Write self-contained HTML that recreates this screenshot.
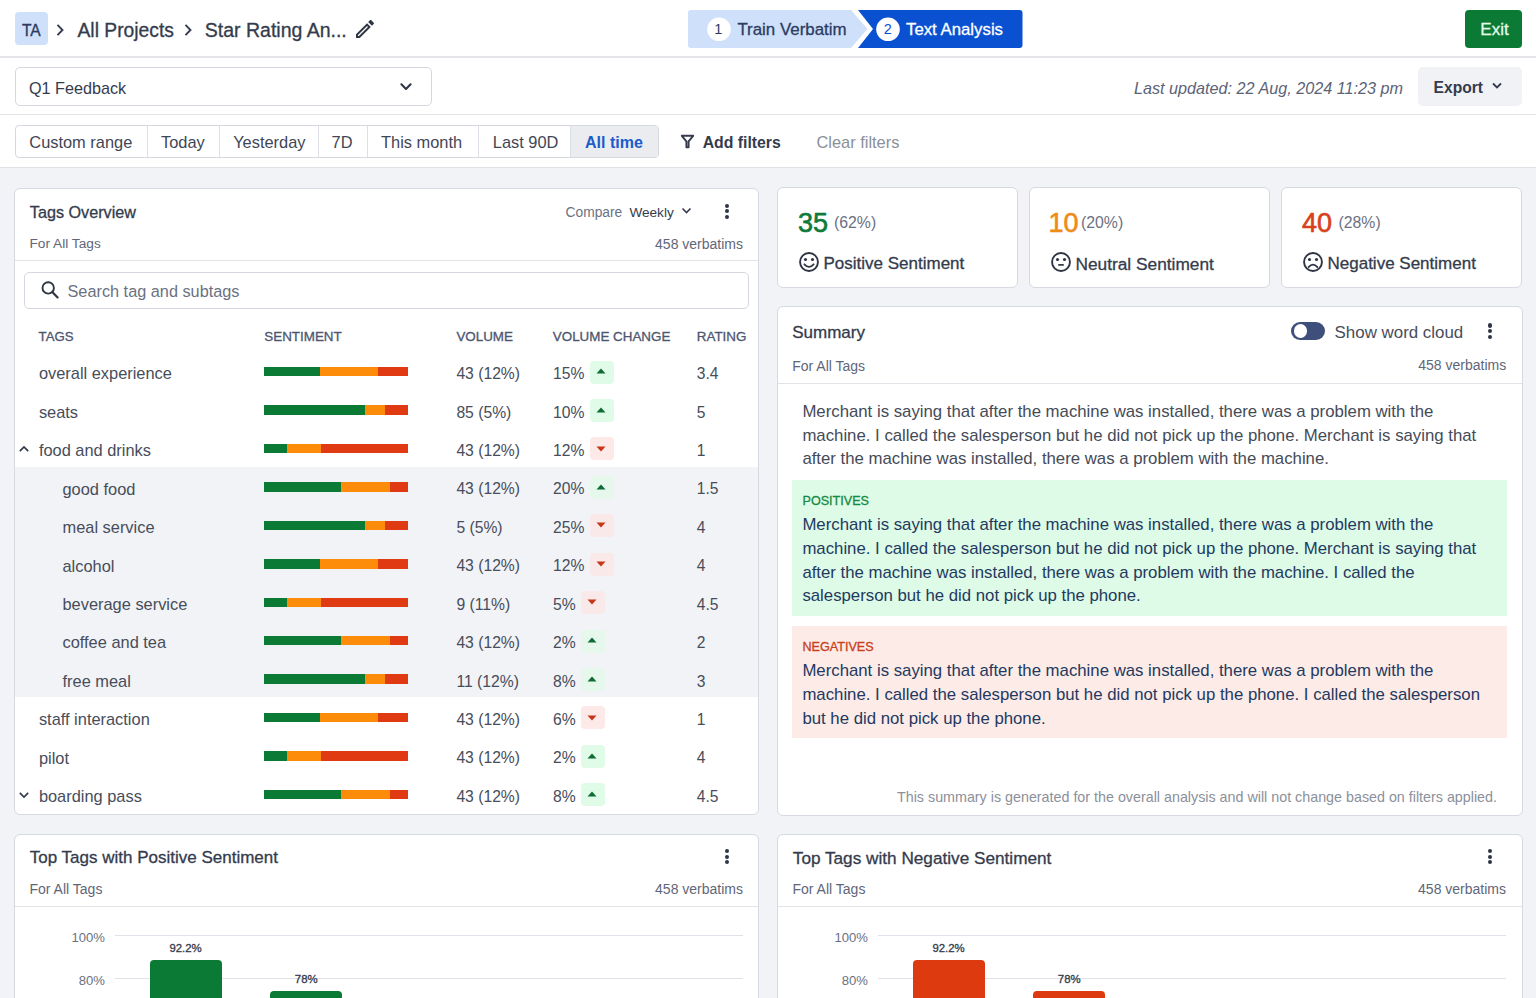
<!DOCTYPE html>
<html><head><meta charset="utf-8">
<style>
*{box-sizing:border-box}
html,body{margin:0;padding:0}
body{width:1536px;height:998px;overflow:hidden;position:relative;background:#f1f3f7;font-family:"Liberation Sans",sans-serif;color:#343b4c}
.a{position:absolute;white-space:nowrap}
.sb{-webkit-text-stroke:0.3px currentColor}
</style></head>
<body>
<div class="a" style="left:0px;top:0px;width:1536px;height:167px;background:#fff"></div>
<div class="a" style="left:0px;top:56px;width:1536px;height:2px;background:#e3e5e9"></div>
<div class="a" style="left:0px;top:114px;width:1536px;height:1px;background:#e1e3e8"></div>
<div class="a" style="left:0px;top:167px;width:1536px;height:1px;background:#dfe1e6"></div>
<div class="a" style="left:15px;top:12px;width:33px;height:33px;background:#cfe0fb;border-radius:4px"></div>
<div class="a sb" style="left:22px;top:20.79px;font-size:15.6px;line-height:20px;color:#2a3b61;">TA</div>
<svg class="a" style="left:55px;top:23px" width="10" height="14" viewBox="0 0 10 14"><path d="M2.5 1.8 L7.5 7 L2.5 12.2" fill="none" stroke="#343b4c" stroke-width="1.9"/></svg>
<div class="a sb" style="left:77.5px;top:18.31px;font-size:19.3px;line-height:25px;color:#343b4c;">All Projects</div>
<svg class="a" style="left:183px;top:23px" width="10" height="14" viewBox="0 0 10 14"><path d="M2.5 1.8 L7.5 7 L2.5 12.2" fill="none" stroke="#343b4c" stroke-width="1.9"/></svg>
<div class="a sb" style="left:204.8px;top:18.24px;font-size:19.5px;line-height:25px;color:#343b4c;">Star Rating An...</div>
<svg class="a" style="left:353px;top:17px" width="24" height="24" viewBox="0 0 24 24"><path fill="#2f3544" d="M3 17.25V21h3.75L17.81 9.94l-3.75-3.75L3 17.25zM5.92 19H5v-.92l9.06-9.06.92.92L5.92 19zM20.71 5.63l-2.34-2.34c-.2-.2-.45-.29-.71-.29s-.51.1-.7.29l-1.83 1.83 3.75 3.75 1.83-1.83c.39-.39.39-1.02 0-1.41z"/></svg>
<svg class="a" style="left:688px;top:10px" width="336" height="38" viewBox="0 0 336 38">
<path d="M0 3 Q0 0 3 0 L163 0 L179.5 19 L163 38 L3 38 Q0 38 0 35 Z" fill="#cfe0fb"/>
<path d="M170 0 L331.5 0 Q334.5 0 334.5 3 L334.5 35 Q334.5 38 331.5 38 L170 38 L185 19 Z" fill="#0a51d1"/>
<circle cx="31" cy="19.3" r="11.8" fill="#fff"/>
<circle cx="200" cy="19.3" r="11.8" fill="#fff"/>
</svg>
<div class="a " style="left:714.3px;top:20.48px;font-size:14.5px;line-height:19px;color:#2a3b61;">1</div>
<div class="a sb" style="left:737.4px;top:19.44px;font-size:16.9px;line-height:22px;color:#2a3b61;">Train Verbatim</div>
<div class="a " style="left:883.8px;top:20.48px;font-size:14.5px;line-height:19px;color:#0a51d1;">2</div>
<div class="a sb" style="left:906px;top:19.48px;font-size:16.8px;line-height:22px;color:#fff;">Text Analysis</div>
<div class="a" style="left:1465px;top:10px;width:57px;height:38px;background:#0b7a35;border-radius:4px"></div>
<div class="a sb" style="left:1480.3px;top:19.41px;font-size:17px;line-height:22px;color:#e3fbe8;">Exit</div>
<div class="a" style="left:15px;top:67px;width:417px;height:39px;border:1px solid #d5d8df;border-radius:5px;background:#fff"></div>
<div class="a " style="left:29px;top:77.89px;font-size:16.2px;line-height:21px;color:#343b4c;">Q1 Feedback</div>
<svg class="a" style="left:398.5px;top:81.5px" width="14" height="10" viewBox="0 0 14 10"><path d="M2.4 2.3 L7 6.9 L11.6 2.3" fill="none" stroke="#2f3544" stroke-width="2.1" stroke-linecap="round" stroke-linejoin="round"/></svg>
<div class="a " style="right:133px;top:77.89px;font-size:16.2px;line-height:21px;color:#5b6377;font-style:italic">Last updated: 22 Aug, 2024 11:23 pm</div>
<div class="a" style="left:1418px;top:67px;width:104px;height:39px;background:#f1f2f6;border-radius:5px"></div>
<div class="a " style="left:1433.6px;top:77.99px;font-size:15.6px;line-height:20px;color:#343b4c;font-weight:bold">Export</div>
<svg class="a" style="left:1491px;top:82px" width="12" height="8" viewBox="0 0 12 8"><path d="M2 1.5 L6 5.5 L10 1.5" fill="none" stroke="#343b4c" stroke-width="1.8"/></svg>
<div class="a" style="left:15px;top:125px;width:644px;height:33px;border:1px solid #d5d8df;border-radius:4px;background:#fff"></div>
<div class="a" style="left:571px;top:126px;width:87px;height:31px;background:#eaecf0;border-radius:0 3px 3px 0"></div>
<div class="a" style="left:147px;top:126px;width:1px;height:31px;background:#dcdfe5"></div>
<div class="a" style="left:219px;top:126px;width:1px;height:31px;background:#dcdfe5"></div>
<div class="a" style="left:318px;top:126px;width:1px;height:31px;background:#dcdfe5"></div>
<div class="a" style="left:367px;top:126px;width:1px;height:31px;background:#dcdfe5"></div>
<div class="a" style="left:478px;top:126px;width:1px;height:31px;background:#dcdfe5"></div>
<div class="a" style="left:570px;top:126px;width:1px;height:31px;background:#dcdfe5"></div>
<div class="a " style="left:29.3px;top:132.12px;font-size:16.4px;line-height:21px;color:#3f4656;">Custom range</div>
<div class="a " style="left:161px;top:132.12px;font-size:16.4px;line-height:21px;color:#3f4656;">Today</div>
<div class="a " style="left:233.2px;top:132.12px;font-size:16.4px;line-height:21px;color:#3f4656;">Yesterday</div>
<div class="a " style="left:331.6px;top:132.12px;font-size:16.4px;line-height:21px;color:#3f4656;">7D</div>
<div class="a " style="left:381px;top:132.12px;font-size:16.4px;line-height:21px;color:#3f4656;">This month</div>
<div class="a " style="left:492.8px;top:132.12px;font-size:16.4px;line-height:21px;color:#3f4656;">Last 90D</div>
<div class="a " style="left:585px;top:132.46px;font-size:16px;line-height:21px;color:#1a5ccb;font-weight:bold">All time</div>
<svg class="a" style="left:680px;top:134px" width="15" height="15" viewBox="0 0 15 15"><path d="M1.8 1.8 L13.2 1.8 L8.6 7.4 L8.6 13.2 L6.4 13.2 L6.4 7.4 Z" fill="none" stroke="#343b4c" stroke-width="1.9" stroke-linejoin="round"/></svg>
<div class="a " style="left:702.7px;top:132.33px;font-size:15.8px;line-height:21px;color:#343b4c;font-weight:bold">Add filters</div>
<div class="a " style="left:816.5px;top:132.12px;font-size:16.4px;line-height:21px;color:#8a8f99;">Clear filters</div>
<div class="a" style="left:14px;top:188px;width:745px;height:627px;background:#fff;border:1px solid #d6d9e0;border-radius:6px"></div>
<div class="a sb" style="left:29.8px;top:202.19px;font-size:16.2px;line-height:21px;color:#343b4c;">Tags Overview</div>
<div class="a " style="left:29.5px;top:234.85px;font-size:13.7px;line-height:18px;color:#5f6679;">For All Tags</div>
<div class="a " style="left:565.5px;top:203.52px;font-size:13.8px;line-height:18px;color:#6b7182;">Compare</div>
<div class="a " style="left:629.4px;top:203.59px;font-size:13.6px;line-height:18px;color:#343b4c;">Weekly</div>
<svg class="a" style="left:681px;top:207px" width="11" height="8" viewBox="0 0 11 8"><path d="M1.5 1.5 L5.5 5.5 L9.5 1.5" fill="none" stroke="#343b4c" stroke-width="1.6"/></svg>
<div class="a" style="left:725.1px;top:203.5px;width:4.2px;height:4.2px;border-radius:50%;background:#2f3544"></div>
<div class="a" style="left:725.1px;top:209.1px;width:4.2px;height:4.2px;border-radius:50%;background:#2f3544"></div>
<div class="a" style="left:725.1px;top:214.7px;width:4.2px;height:4.2px;border-radius:50%;background:#2f3544"></div>
<div class="a " style="right:793px;top:234.55px;font-size:14px;line-height:18px;color:#5f6679;">458 verbatims</div>
<div class="a" style="left:15px;top:260px;width:743px;height:1px;background:#e1e3e8"></div>
<div class="a" style="left:24px;top:272px;width:725px;height:37px;border:1px solid #d5d8df;border-radius:5px;background:#fff"></div>
<svg class="a" style="left:40px;top:281px" width="20" height="19" viewBox="0 0 20 19"><circle cx="8.2" cy="6.9" r="5.7" fill="none" stroke="#2f3544" stroke-width="1.9"/><path d="M12.3 11 L17.6 16.4" stroke="#2f3544" stroke-width="2.2" stroke-linecap="round"/></svg>
<div class="a " style="left:67.5px;top:281.35px;font-size:16.3px;line-height:21px;color:#6b7182;">Search tag and subtags</div>
<div class="a sb" style="left:38.6px;top:328.43px;font-size:13.2px;line-height:17px;color:#4d5670;">TAGS</div>
<div class="a sb" style="left:264.3px;top:328.46px;font-size:13.4px;line-height:17px;color:#4d5670;">SENTIMENT</div>
<div class="a sb" style="left:456.4px;top:328.46px;font-size:13.4px;line-height:17px;color:#4d5670;">VOLUME</div>
<div class="a sb" style="left:552.8px;top:328.46px;font-size:13.4px;line-height:17px;color:#4d5670;">VOLUME CHANGE</div>
<div class="a sb" style="left:696.8px;top:328.46px;font-size:13.4px;line-height:17px;color:#4d5670;">RATING</div>
<div class="a" style="left:15px;top:467px;width:743px;height:230px;background:#f1f3f7"></div>
<div class="a " style="left:38.9px;top:363.42px;font-size:16.4px;line-height:21px;color:#474d5a;">overall experience</div>
<div class="a" style="left:264px;top:366.7px;width:56px;height:9.5px;background:#0b7a35"></div>
<div class="a" style="left:320px;top:366.7px;width:58px;height:9.5px;background:#fd8c0b"></div>
<div class="a" style="left:378px;top:366.7px;width:30px;height:9.5px;background:#e03a12"></div>
<div class="a " style="left:456.4px;top:364.16px;font-size:15.7px;line-height:20px;color:#474d5a;">43 (12%)</div>
<div class="a " style="left:553px;top:364.16px;font-size:15.7px;line-height:20px;color:#474d5a;">15%</div>
<div class="a" style="left:589.5px;top:360.6px;width:24px;height:23px;background:#e0fbe8;border-radius:4px"></div>
<svg class="a" style="left:595.8px;top:368.4px" width="10" height="6" viewBox="0 0 10 6"><path d="M0.5 5.5 L5 0.5 L9.5 5.5 Z" fill="#0d6b34"/></svg>
<div class="a " style="left:696.8px;top:364.19px;font-size:15.6px;line-height:20px;color:#474d5a;">3.4</div>
<div class="a " style="left:38.9px;top:401.84px;font-size:16.4px;line-height:21px;color:#474d5a;">seats</div>
<div class="a" style="left:264px;top:405.2px;width:101px;height:9.5px;background:#0b7a35"></div>
<div class="a" style="left:365px;top:405.2px;width:20px;height:9.5px;background:#fd8c0b"></div>
<div class="a" style="left:385px;top:405.2px;width:23px;height:9.5px;background:#e03a12"></div>
<div class="a " style="left:456.4px;top:402.58px;font-size:15.7px;line-height:20px;color:#474d5a;">85 (5%)</div>
<div class="a " style="left:553px;top:402.58px;font-size:15.7px;line-height:20px;color:#474d5a;">10%</div>
<div class="a" style="left:589.5px;top:399.0px;width:24px;height:23px;background:#e0fbe8;border-radius:4px"></div>
<svg class="a" style="left:595.8px;top:406.8px" width="10" height="6" viewBox="0 0 10 6"><path d="M0.5 5.5 L5 0.5 L9.5 5.5 Z" fill="#0d6b34"/></svg>
<div class="a " style="left:696.8px;top:402.61px;font-size:15.6px;line-height:20px;color:#474d5a;">5</div>
<div class="a " style="left:38.9px;top:440.26px;font-size:16.4px;line-height:21px;color:#474d5a;">food and drinks</div>
<svg class="a" style="left:18px;top:445.4px" width="12" height="8" viewBox="0 0 12 8"><path d="M1.8 6.2 L6 2 L10.2 6.2" fill="none" stroke="#343b4c" stroke-width="1.7"/></svg>
<div class="a" style="left:264px;top:443.6px;width:23px;height:9.5px;background:#0b7a35"></div>
<div class="a" style="left:287px;top:443.6px;width:34px;height:9.5px;background:#fd8c0b"></div>
<div class="a" style="left:321px;top:443.6px;width:87px;height:9.5px;background:#e03a12"></div>
<div class="a " style="left:456.4px;top:441.00px;font-size:15.7px;line-height:20px;color:#474d5a;">43 (12%)</div>
<div class="a " style="left:553px;top:441.00px;font-size:15.7px;line-height:20px;color:#474d5a;">12%</div>
<div class="a" style="left:589.5px;top:437.4px;width:24px;height:23px;background:#fde9e7;border-radius:4px"></div>
<svg class="a" style="left:595.8px;top:445.5px" width="10" height="6" viewBox="0 0 10 6"><path d="M0.5 0.5 L5 5.5 L9.5 0.5 Z" fill="#c8361a"/></svg>
<div class="a " style="left:696.8px;top:441.03px;font-size:15.6px;line-height:20px;color:#474d5a;">1</div>
<div class="a " style="left:62.5px;top:478.68px;font-size:16.4px;line-height:21px;color:#474d5a;">good food</div>
<div class="a" style="left:264px;top:482.1px;width:77px;height:9.5px;background:#0b7a35"></div>
<div class="a" style="left:341px;top:482.1px;width:49px;height:9.5px;background:#fd8c0b"></div>
<div class="a" style="left:390px;top:482.1px;width:18px;height:9.5px;background:#e03a12"></div>
<div class="a " style="left:456.4px;top:479.42px;font-size:15.7px;line-height:20px;color:#474d5a;">43 (12%)</div>
<div class="a " style="left:553px;top:479.42px;font-size:15.7px;line-height:20px;color:#474d5a;">20%</div>
<div class="a" style="left:589.5px;top:475.9px;width:24px;height:23px;background:#e6f8ec;border-radius:4px"></div>
<svg class="a" style="left:595.8px;top:483.7px" width="10" height="6" viewBox="0 0 10 6"><path d="M0.5 5.5 L5 0.5 L9.5 5.5 Z" fill="#0d6b34"/></svg>
<div class="a " style="left:696.8px;top:479.45px;font-size:15.6px;line-height:20px;color:#474d5a;">1.5</div>
<div class="a " style="left:62.5px;top:517.10px;font-size:16.4px;line-height:21px;color:#474d5a;">meal service</div>
<div class="a" style="left:264px;top:520.5px;width:101px;height:9.5px;background:#0b7a35"></div>
<div class="a" style="left:365px;top:520.5px;width:20px;height:9.5px;background:#fd8c0b"></div>
<div class="a" style="left:385px;top:520.5px;width:23px;height:9.5px;background:#e03a12"></div>
<div class="a " style="left:456.4px;top:517.84px;font-size:15.7px;line-height:20px;color:#474d5a;">5 (5%)</div>
<div class="a " style="left:553px;top:517.84px;font-size:15.7px;line-height:20px;color:#474d5a;">25%</div>
<div class="a" style="left:589.5px;top:514.3px;width:24px;height:23px;background:#f9e9e8;border-radius:4px"></div>
<svg class="a" style="left:595.8px;top:522.4px" width="10" height="6" viewBox="0 0 10 6"><path d="M0.5 0.5 L5 5.5 L9.5 0.5 Z" fill="#c8361a"/></svg>
<div class="a " style="left:696.8px;top:517.87px;font-size:15.6px;line-height:20px;color:#474d5a;">4</div>
<div class="a " style="left:62.5px;top:555.52px;font-size:16.4px;line-height:21px;color:#474d5a;">alcohol</div>
<div class="a" style="left:264px;top:559.0px;width:56px;height:9.5px;background:#0b7a35"></div>
<div class="a" style="left:320px;top:559.0px;width:58px;height:9.5px;background:#fd8c0b"></div>
<div class="a" style="left:378px;top:559.0px;width:30px;height:9.5px;background:#e03a12"></div>
<div class="a " style="left:456.4px;top:556.26px;font-size:15.7px;line-height:20px;color:#474d5a;">43 (12%)</div>
<div class="a " style="left:553px;top:556.26px;font-size:15.7px;line-height:20px;color:#474d5a;">12%</div>
<div class="a" style="left:589.5px;top:552.7px;width:24px;height:23px;background:#f9e9e8;border-radius:4px"></div>
<svg class="a" style="left:595.8px;top:560.8px" width="10" height="6" viewBox="0 0 10 6"><path d="M0.5 0.5 L5 5.5 L9.5 0.5 Z" fill="#c8361a"/></svg>
<div class="a " style="left:696.8px;top:556.29px;font-size:15.6px;line-height:20px;color:#474d5a;">4</div>
<div class="a " style="left:62.5px;top:593.94px;font-size:16.4px;line-height:21px;color:#474d5a;">beverage service</div>
<div class="a" style="left:264px;top:597.5px;width:23px;height:9.5px;background:#0b7a35"></div>
<div class="a" style="left:287px;top:597.5px;width:34px;height:9.5px;background:#fd8c0b"></div>
<div class="a" style="left:321px;top:597.5px;width:87px;height:9.5px;background:#e03a12"></div>
<div class="a " style="left:456.4px;top:594.68px;font-size:15.7px;line-height:20px;color:#474d5a;">9 (11%)</div>
<div class="a " style="left:553px;top:594.68px;font-size:15.7px;line-height:20px;color:#474d5a;">5%</div>
<div class="a" style="left:580.5px;top:591.1px;width:24px;height:23px;background:#f9e9e8;border-radius:4px"></div>
<svg class="a" style="left:586.8px;top:599.2px" width="10" height="6" viewBox="0 0 10 6"><path d="M0.5 0.5 L5 5.5 L9.5 0.5 Z" fill="#c8361a"/></svg>
<div class="a " style="left:696.8px;top:594.71px;font-size:15.6px;line-height:20px;color:#474d5a;">4.5</div>
<div class="a " style="left:62.5px;top:632.36px;font-size:16.4px;line-height:21px;color:#474d5a;">coffee and tea</div>
<div class="a" style="left:264px;top:635.9px;width:77px;height:9.5px;background:#0b7a35"></div>
<div class="a" style="left:341px;top:635.9px;width:49px;height:9.5px;background:#fd8c0b"></div>
<div class="a" style="left:390px;top:635.9px;width:18px;height:9.5px;background:#e03a12"></div>
<div class="a " style="left:456.4px;top:633.10px;font-size:15.7px;line-height:20px;color:#474d5a;">43 (12%)</div>
<div class="a " style="left:553px;top:633.10px;font-size:15.7px;line-height:20px;color:#474d5a;">2%</div>
<div class="a" style="left:580.5px;top:629.5px;width:24px;height:23px;background:#e6f8ec;border-radius:4px"></div>
<svg class="a" style="left:586.8px;top:637.3px" width="10" height="6" viewBox="0 0 10 6"><path d="M0.5 5.5 L5 0.5 L9.5 5.5 Z" fill="#0d6b34"/></svg>
<div class="a " style="left:696.8px;top:633.13px;font-size:15.6px;line-height:20px;color:#474d5a;">2</div>
<div class="a " style="left:62.5px;top:670.78px;font-size:16.4px;line-height:21px;color:#474d5a;">free meal</div>
<div class="a" style="left:264px;top:674.4px;width:101px;height:9.5px;background:#0b7a35"></div>
<div class="a" style="left:365px;top:674.4px;width:20px;height:9.5px;background:#fd8c0b"></div>
<div class="a" style="left:385px;top:674.4px;width:23px;height:9.5px;background:#e03a12"></div>
<div class="a " style="left:456.4px;top:671.52px;font-size:15.7px;line-height:20px;color:#474d5a;">11 (12%)</div>
<div class="a " style="left:553px;top:671.52px;font-size:15.7px;line-height:20px;color:#474d5a;">8%</div>
<div class="a" style="left:580.5px;top:668.0px;width:24px;height:23px;background:#e6f8ec;border-radius:4px"></div>
<svg class="a" style="left:586.8px;top:675.8px" width="10" height="6" viewBox="0 0 10 6"><path d="M0.5 5.5 L5 0.5 L9.5 5.5 Z" fill="#0d6b34"/></svg>
<div class="a " style="left:696.8px;top:671.55px;font-size:15.6px;line-height:20px;color:#474d5a;">3</div>
<div class="a " style="left:38.9px;top:709.20px;font-size:16.4px;line-height:21px;color:#474d5a;">staff interaction</div>
<div class="a" style="left:264px;top:712.8px;width:56px;height:9.5px;background:#0b7a35"></div>
<div class="a" style="left:320px;top:712.8px;width:58px;height:9.5px;background:#fd8c0b"></div>
<div class="a" style="left:378px;top:712.8px;width:30px;height:9.5px;background:#e03a12"></div>
<div class="a " style="left:456.4px;top:709.94px;font-size:15.7px;line-height:20px;color:#474d5a;">43 (12%)</div>
<div class="a " style="left:553px;top:709.94px;font-size:15.7px;line-height:20px;color:#474d5a;">6%</div>
<div class="a" style="left:580.5px;top:706.4px;width:24px;height:23px;background:#fde9e7;border-radius:4px"></div>
<svg class="a" style="left:586.8px;top:714.5px" width="10" height="6" viewBox="0 0 10 6"><path d="M0.5 0.5 L5 5.5 L9.5 0.5 Z" fill="#c8361a"/></svg>
<div class="a " style="left:696.8px;top:709.97px;font-size:15.6px;line-height:20px;color:#474d5a;">1</div>
<div class="a " style="left:38.9px;top:747.62px;font-size:16.4px;line-height:21px;color:#474d5a;">pilot</div>
<div class="a" style="left:264px;top:751.3px;width:23px;height:9.5px;background:#0b7a35"></div>
<div class="a" style="left:287px;top:751.3px;width:34px;height:9.5px;background:#fd8c0b"></div>
<div class="a" style="left:321px;top:751.3px;width:87px;height:9.5px;background:#e03a12"></div>
<div class="a " style="left:456.4px;top:748.36px;font-size:15.7px;line-height:20px;color:#474d5a;">43 (12%)</div>
<div class="a " style="left:553px;top:748.36px;font-size:15.7px;line-height:20px;color:#474d5a;">2%</div>
<div class="a" style="left:580.5px;top:744.8px;width:24px;height:23px;background:#e0fbe8;border-radius:4px"></div>
<svg class="a" style="left:586.8px;top:752.6px" width="10" height="6" viewBox="0 0 10 6"><path d="M0.5 5.5 L5 0.5 L9.5 5.5 Z" fill="#0d6b34"/></svg>
<div class="a " style="left:696.8px;top:748.39px;font-size:15.6px;line-height:20px;color:#474d5a;">4</div>
<div class="a " style="left:38.9px;top:786.04px;font-size:16.4px;line-height:21px;color:#474d5a;">boarding pass</div>
<svg class="a" style="left:18px;top:791.2px" width="12" height="8" viewBox="0 0 12 8"><path d="M1.8 1.8 L6 6 L10.2 1.8" fill="none" stroke="#343b4c" stroke-width="1.7"/></svg>
<div class="a" style="left:264px;top:789.8px;width:77px;height:9.5px;background:#0b7a35"></div>
<div class="a" style="left:341px;top:789.8px;width:49px;height:9.5px;background:#fd8c0b"></div>
<div class="a" style="left:390px;top:789.8px;width:18px;height:9.5px;background:#e03a12"></div>
<div class="a " style="left:456.4px;top:786.78px;font-size:15.7px;line-height:20px;color:#474d5a;">43 (12%)</div>
<div class="a " style="left:553px;top:786.78px;font-size:15.7px;line-height:20px;color:#474d5a;">8%</div>
<div class="a" style="left:580.5px;top:783.2px;width:24px;height:23px;background:#e0fbe8;border-radius:4px"></div>
<svg class="a" style="left:586.8px;top:791.0px" width="10" height="6" viewBox="0 0 10 6"><path d="M0.5 5.5 L5 0.5 L9.5 5.5 Z" fill="#0d6b34"/></svg>
<div class="a " style="left:696.8px;top:786.81px;font-size:15.6px;line-height:20px;color:#474d5a;">4.5</div>
<div class="a" style="left:777px;top:187px;width:241px;height:101px;background:#fff;border:1px solid #d6d9e0;border-radius:6px"></div>
<div class="a " style="left:798px;top:205.84px;font-size:27px;line-height:35px;color:#0f7a3a;-webkit-text-stroke:0.6px #0f7a3a">35</div>
<div class="a " style="left:834px;top:212.03px;font-size:15.8px;line-height:21px;color:#6b7182;">(62%)</div>
<svg class="a" style="left:798.8px;top:251.8px" width="20" height="20" viewBox="0 0 20 20"><circle cx="10" cy="10" r="8.95" fill="none" stroke="#2f3544" stroke-width="1.9"/><circle cx="6.5" cy="7.5" r="1.55" fill="#2f3544"/><circle cx="13.5" cy="7.5" r="1.55" fill="#2f3544"/><path d="M5.4 12.3 Q10 17.4 14.6 12.3" fill="none" stroke="#2f3544" stroke-width="1.8" stroke-linecap="round"/></svg>
<div class="a sb" style="left:823.5px;top:252.71px;font-size:17px;line-height:22px;color:#343b4c;">Positive Sentiment</div>
<div class="a" style="left:1029px;top:187px;width:241px;height:101px;background:#fff;border:1px solid #d6d9e0;border-radius:6px"></div>
<div class="a " style="left:1048.5px;top:205.84px;font-size:27px;line-height:35px;color:#ef8b17;-webkit-text-stroke:0.6px #ef8b17">10</div>
<div class="a " style="left:1081px;top:212.03px;font-size:15.8px;line-height:21px;color:#6b7182;">(20%)</div>
<svg class="a" style="left:1050.8px;top:251.8px" width="20" height="20" viewBox="0 0 20 20"><circle cx="10" cy="10" r="8.95" fill="none" stroke="#2f3544" stroke-width="1.9"/><circle cx="6.5" cy="7.5" r="1.55" fill="#2f3544"/><circle cx="13.5" cy="7.5" r="1.55" fill="#2f3544"/><path d="M7.2 12.9 L12.8 12.9" fill="none" stroke="#2f3544" stroke-width="1.7"/></svg>
<div class="a sb" style="left:1075.5px;top:252.61px;font-size:17.3px;line-height:22px;color:#343b4c;">Neutral Sentiment</div>
<div class="a" style="left:1281px;top:187px;width:241px;height:101px;background:#fff;border:1px solid #d6d9e0;border-radius:6px"></div>
<div class="a " style="left:1302px;top:205.84px;font-size:27px;line-height:35px;color:#d9401c;-webkit-text-stroke:0.6px #d9401c">40</div>
<div class="a " style="left:1338.5px;top:212.03px;font-size:15.8px;line-height:21px;color:#6b7182;">(28%)</div>
<svg class="a" style="left:1302.8px;top:251.8px" width="20" height="20" viewBox="0 0 20 20"><circle cx="10" cy="10" r="8.95" fill="none" stroke="#2f3544" stroke-width="1.9"/><circle cx="6.5" cy="7.5" r="1.55" fill="#2f3544"/><circle cx="13.5" cy="7.5" r="1.55" fill="#2f3544"/><path d="M5.6 15.1 Q10 10.1 14.4 15.1" fill="none" stroke="#2f3544" stroke-width="1.8" stroke-linecap="round"/></svg>
<div class="a sb" style="left:1327.5px;top:252.71px;font-size:17px;line-height:22px;color:#343b4c;">Negative Sentiment</div>
<div class="a" style="left:777px;top:306px;width:746px;height:510px;background:#fff;border:1px solid #d6d9e0;border-radius:6px"></div>
<div class="a sb" style="left:792.2px;top:322.01px;font-size:17px;line-height:22px;color:#343b4c;">Summary</div>
<div class="a " style="left:792.2px;top:356.75px;font-size:14px;line-height:18px;color:#5f6679;">For All Tags</div>
<div class="a" style="left:1291px;top:322px;width:34px;height:18px;background:#3e4f7b;border-radius:9px"></div>
<div class="a" style="left:1293.5px;top:324.2px;width:13.6px;height:13.6px;background:#fff;border-radius:50%"></div>
<div class="a " style="left:1334.6px;top:321.54px;font-size:16.9px;line-height:22px;color:#474d5a;">Show word cloud</div>
<div class="a" style="left:1488.3000000000002px;top:323.4px;width:4.2px;height:4.2px;border-radius:50%;background:#2f3544"></div>
<div class="a" style="left:1488.3000000000002px;top:329.0px;width:4.2px;height:4.2px;border-radius:50%;background:#2f3544"></div>
<div class="a" style="left:1488.3000000000002px;top:334.59999999999997px;width:4.2px;height:4.2px;border-radius:50%;background:#2f3544"></div>
<div class="a " style="right:29.799999999999955px;top:356.45px;font-size:14px;line-height:18px;color:#5f6679;">458 verbatims</div>
<div class="a" style="left:778px;top:383px;width:744px;height:1px;background:#e1e3e8"></div>
<div class="a " style="left:802.4px;top:400.69px;font-size:16.77px;line-height:22px;color:#454b57;">Merchant is saying that after the machine was installed, there was a problem with the</div>
<div class="a " style="left:802.4px;top:424.59px;font-size:16.77px;line-height:22px;color:#454b57;">machine. I called the salesperson but he did not pick up the phone. Merchant is saying that</div>
<div class="a " style="left:802.4px;top:448.49px;font-size:16.77px;line-height:22px;color:#454b57;">after the machine was installed, there was a problem with the machine.</div>
<div class="a" style="left:792px;top:480px;width:715px;height:136px;background:#ddfbe6"></div>
<div class="a sb" style="left:802.5px;top:493.03px;font-size:12.6px;line-height:16px;color:#178a44;">POSITIVES</div>
<div class="a " style="left:802.4px;top:513.99px;font-size:16.77px;line-height:22px;color:#23395f;">Merchant is saying that after the machine was installed, there was a problem with the</div>
<div class="a " style="left:802.4px;top:537.79px;font-size:16.77px;line-height:22px;color:#23395f;">machine. I called the salesperson but he did not pick up the phone. Merchant is saying that</div>
<div class="a " style="left:802.4px;top:561.59px;font-size:16.77px;line-height:22px;color:#23395f;">after the machine was installed, there was a problem with the machine. I called the</div>
<div class="a " style="left:802.4px;top:585.39px;font-size:16.77px;line-height:22px;color:#23395f;">salesperson but he did not pick up the phone.</div>
<div class="a" style="left:792px;top:626px;width:715px;height:112px;background:#fdebe8"></div>
<div class="a sb" style="left:802.5px;top:639.33px;font-size:12.6px;line-height:16px;color:#c8401a;">NEGATIVES</div>
<div class="a " style="left:802.4px;top:660.19px;font-size:16.77px;line-height:22px;color:#23395f;">Merchant is saying that after the machine was installed, there was a problem with the</div>
<div class="a " style="left:802.4px;top:683.99px;font-size:16.77px;line-height:22px;color:#23395f;">machine. I called the salesperson but he did not pick up the phone. I called the salesperson</div>
<div class="a " style="left:802.4px;top:707.79px;font-size:16.77px;line-height:22px;color:#23395f;">but he did not pick up the phone.</div>
<div class="a " style="right:39px;top:788.25px;font-size:14.3px;line-height:19px;color:#8b909a;">This summary is generated for the overall analysis and will not change based on filters applied.</div>
<div class="a" style="left:14px;top:834px;width:745px;height:200px;background:#fff;border:1px solid #d6d9e0;border-radius:6px"></div>
<div class="a sb" style="left:29.8px;top:846.91px;font-size:17px;line-height:22px;color:#343b4c;">Top Tags with Positive Sentiment</div>
<div class="a " style="left:29.5px;top:879.95px;font-size:14px;line-height:18px;color:#5f6679;">For All Tags</div>
<div class="a" style="left:725.1px;top:849.0px;width:4.2px;height:4.2px;border-radius:50%;background:#2f3544"></div>
<div class="a" style="left:725.1px;top:854.6px;width:4.2px;height:4.2px;border-radius:50%;background:#2f3544"></div>
<div class="a" style="left:725.1px;top:860.2px;width:4.2px;height:4.2px;border-radius:50%;background:#2f3544"></div>
<div class="a " style="right:793px;top:879.95px;font-size:14px;line-height:18px;color:#5f6679;">458 verbatims</div>
<div class="a" style="left:15px;top:906px;width:743px;height:1px;background:#e1e3e8"></div>
<div class="a " style="right:1431px;top:928.86px;font-size:13.1px;line-height:17px;color:#6b7182;">100%</div>
<div class="a " style="right:1431px;top:972.16px;font-size:13.1px;line-height:17px;color:#6b7182;">80%</div>
<div class="a" style="left:115px;top:935px;width:628px;height:1px;background:#dfe2e8"></div>
<div class="a" style="left:115px;top:978px;width:628px;height:1px;background:#dfe2e8"></div>
<div class="a" style="left:150px;top:960px;width:72px;height:60px;background:#0b7a35;border-radius:4px 4px 0 0"></div>
<div class="a" style="left:270px;top:990.5px;width:72px;height:30px;background:#0b7a35;border-radius:4px 4px 0 0"></div>
<div class="a sb" style="left:169.4px;top:940.95px;font-size:11.4px;line-height:15px;color:#343b4c;">92.2%</div>
<div class="a sb" style="left:294.8px;top:971.85px;font-size:11.4px;line-height:15px;color:#343b4c;">78%</div>
<div class="a" style="left:777px;top:834px;width:746px;height:200px;background:#fff;border:1px solid #d6d9e0;border-radius:6px"></div>
<div class="a sb" style="left:792.8px;top:846.84px;font-size:17.2px;line-height:22px;color:#343b4c;">Top Tags with Negative Sentiment</div>
<div class="a " style="left:792.5px;top:879.95px;font-size:14px;line-height:18px;color:#5f6679;">For All Tags</div>
<div class="a" style="left:1488.1000000000001px;top:849.0px;width:4.2px;height:4.2px;border-radius:50%;background:#2f3544"></div>
<div class="a" style="left:1488.1000000000001px;top:854.6px;width:4.2px;height:4.2px;border-radius:50%;background:#2f3544"></div>
<div class="a" style="left:1488.1000000000001px;top:860.2px;width:4.2px;height:4.2px;border-radius:50%;background:#2f3544"></div>
<div class="a " style="right:30px;top:879.95px;font-size:14px;line-height:18px;color:#5f6679;">458 verbatims</div>
<div class="a" style="left:778px;top:906px;width:744px;height:1px;background:#e1e3e8"></div>
<div class="a " style="right:668px;top:928.86px;font-size:13.1px;line-height:17px;color:#6b7182;">100%</div>
<div class="a " style="right:668px;top:972.16px;font-size:13.1px;line-height:17px;color:#6b7182;">80%</div>
<div class="a" style="left:878px;top:935px;width:628px;height:1px;background:#dfe2e8"></div>
<div class="a" style="left:878px;top:978px;width:628px;height:1px;background:#dfe2e8"></div>
<div class="a" style="left:913px;top:960px;width:72px;height:60px;background:#dd3a10;border-radius:4px 4px 0 0"></div>
<div class="a" style="left:1033px;top:990.5px;width:72px;height:30px;background:#dd3a10;border-radius:4px 4px 0 0"></div>
<div class="a sb" style="left:932.4px;top:940.95px;font-size:11.4px;line-height:15px;color:#343b4c;">92.2%</div>
<div class="a sb" style="left:1057.8px;top:971.85px;font-size:11.4px;line-height:15px;color:#343b4c;">78%</div>
</body></html>
